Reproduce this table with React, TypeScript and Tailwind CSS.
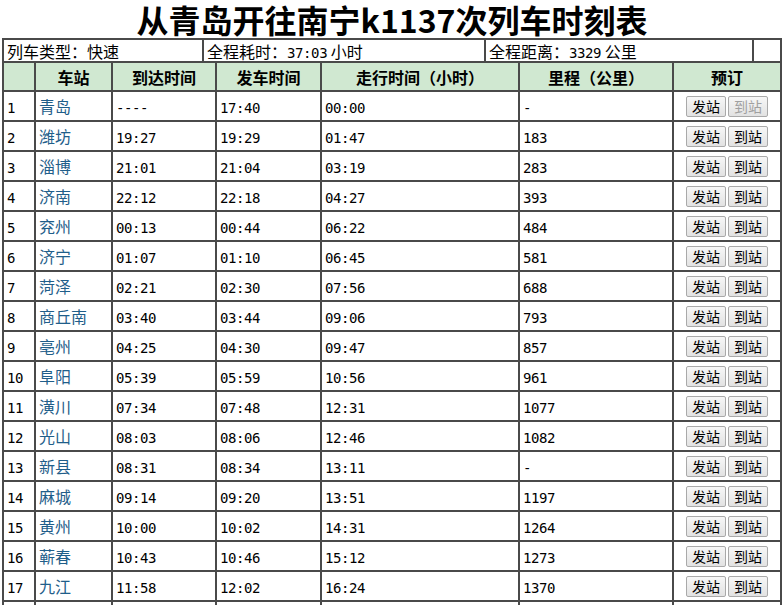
import React from 'react'

type Stop = {
  no: number
  name: string
  arrive: string
  depart: string
  elapsed: string
  km: string
}

const stops: Stop[] = [
  { no: 1, name: '青岛', arrive: '----', depart: '17:40', elapsed: '00:00', km: '-' },
  { no: 2, name: '潍坊', arrive: '19:27', depart: '19:29', elapsed: '01:47', km: '183' },
  { no: 3, name: '淄博', arrive: '21:01', depart: '21:04', elapsed: '03:19', km: '283' },
  { no: 4, name: '济南', arrive: '22:12', depart: '22:18', elapsed: '04:27', km: '393' },
  { no: 5, name: '兖州', arrive: '00:13', depart: '00:44', elapsed: '06:22', km: '484' },
  { no: 6, name: '济宁', arrive: '01:07', depart: '01:10', elapsed: '06:45', km: '581' },
  { no: 7, name: '菏泽', arrive: '02:21', depart: '02:30', elapsed: '07:56', km: '688' },
  { no: 8, name: '商丘南', arrive: '03:40', depart: '03:44', elapsed: '09:06', km: '793' },
  { no: 9, name: '亳州', arrive: '04:25', depart: '04:30', elapsed: '09:47', km: '857' },
  { no: 10, name: '阜阳', arrive: '05:39', depart: '05:59', elapsed: '10:56', km: '961' },
  { no: 11, name: '潢川', arrive: '07:34', depart: '07:48', elapsed: '12:31', km: '1077' },
  { no: 12, name: '光山', arrive: '08:03', depart: '08:06', elapsed: '12:46', km: '1082' },
  { no: 13, name: '新县', arrive: '08:31', depart: '08:34', elapsed: '13:11', km: '-' },
  { no: 14, name: '麻城', arrive: '09:14', depart: '09:20', elapsed: '13:51', km: '1197' },
  { no: 15, name: '黄州', arrive: '10:00', depart: '10:02', elapsed: '14:31', km: '1264' },
  { no: 16, name: '蕲春', arrive: '10:43', depart: '10:46', elapsed: '15:12', km: '1273' },
  { no: 17, name: '九江', arrive: '11:58', depart: '12:02', elapsed: '16:24', km: '1370' },
  { no: 18, name: '南昌', arrive: '13:20', depart: '13:32', elapsed: '17:40', km: '1505' },
]

const cjk = "font-['Noto_Sans_CJK_SC',sans-serif]"
const mono = "font-['DejaVu_Sans_Mono','Noto_Sans_CJK_SC',monospace] text-[14px] tracking-[-0.4px] leading-none"
const cell = 'border-r-2 border-b-2 border-[#4a4a4a] px-[3px] text-left align-middle leading-[20px]'
const head = 'border-r-2 border-b-2 border-[#4a4a4a] text-center align-middle font-bold leading-[20px]'

function BookButton({ label, disabled }: { label: string; disabled?: boolean }) {
  return (
    <button
      disabled={disabled}
      className={`h-[21px] w-[40px] rounded-[2px] border border-[#a9a9a9] bg-gradient-to-b from-[#f7f7f7] to-[#e2e2e2] text-[14px] leading-[19px] ${
        disabled ? 'text-[#a0a0a0]' : 'text-black'
      }`}
    >
      {label}
    </button>
  )
}

export default function App() {
  return (
    <div className={`w-[784px] bg-white text-black ${cjk} text-[16px]`}>
      <h1 className="h-[38px] overflow-hidden text-center text-[32px] font-bold leading-[38px] font-['Noto_Sans_CJK_SC','DejaVu_Serif',serif]">
        从青岛开往南宁k1137次列车时刻表
      </h1>

      {/* Train summary */}
      <table className="ml-[2px] w-[780px] table-fixed border-separate border-spacing-0 border-t-2 border-l-2 border-[#4a4a4a]">
        <colgroup>
          <col className="w-[200px]" />
          <col className="w-[282px]" />
          <col className="w-[268px]" />
          <col className="w-[28px]" />
        </colgroup>
        <tbody>
          <tr className="h-[23px]">
            <td className={cell}>列车类型：快速</td>
            <td className={cell}>
              全程耗时：<span className={mono}>37:03</span> 小时
            </td>
            <td className={cell}>
              全程距离：<span className={mono}>3329</span> 公里
            </td>
            <td className={cell}></td>
          </tr>
        </tbody>
      </table>

      {/* Timetable */}
      <table className="ml-[2px] w-[780px] table-fixed border-separate border-spacing-0 border-l-2 border-[#4a4a4a]">
        <colgroup>
          <col className="w-[32px]" />
          <col className="w-[77px]" />
          <col className="w-[104px]" />
          <col className="w-[105px]" />
          <col className="w-[198px]" />
          <col className="w-[154px]" />
          <col className="w-[108px]" />
        </colgroup>
        <thead>
          <tr className="h-[29px] bg-[#d0e8d1]">
            <th className={head}></th>
            <th className={head}>车站</th>
            <th className={head}>到达时间</th>
            <th className={head}>发车时间</th>
            <th className={head}>走行时间（小时）</th>
            <th className={head}>里程（公里）</th>
            <th className={head}>预订</th>
          </tr>
        </thead>
        <tbody>
          {stops.map((s) => (
            <tr key={s.no} className="h-[30px]">
              <td className={cell}>
                <span className={mono}>{s.no}</span>
              </td>
              <td className={`${cell} text-[#1f5e8a]`}>{s.name}</td>
              <td className={cell}>
                <span className={mono}>{s.arrive}</span>
              </td>
              <td className={cell}>
                <span className={mono}>{s.depart}</span>
              </td>
              <td className={cell}>
                <span className={mono}>{s.elapsed}</span>
              </td>
              <td className={cell}>
                <span className={mono}>{s.km}</span>
              </td>
              <td className={`${cell} text-center`}>
                <div className="flex justify-center gap-[2px]">
                  <BookButton label="发站" />
                  <BookButton label="到站" disabled={s.no === 1} />
                </div>
              </td>
            </tr>
          ))}
        </tbody>
      </table>
    </div>
  )
}
